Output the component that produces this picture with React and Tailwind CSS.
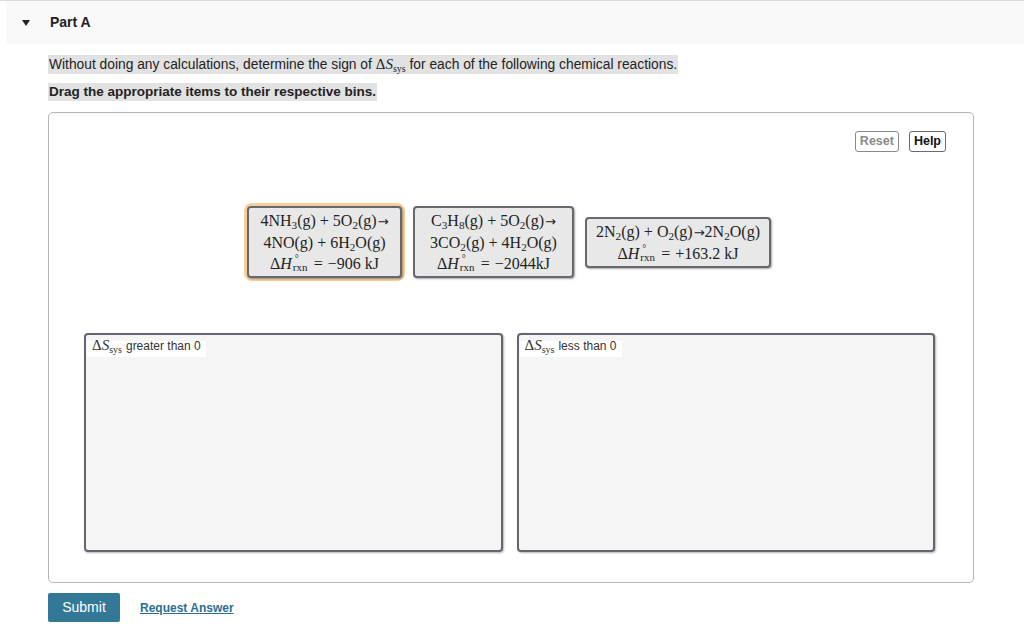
const serif = "font-['Liberation_Serif','DejaVu_Serif',serif]";

const Sub = ({ children }) => (
  <sub className="text-[0.7em] leading-none relative top-[0.28em] align-baseline">{children}</sub>
);

const Plus = () => <span className="mx-[4px]">+</span>;
const Eq = () => <span className="mx-[5px]">=</span>;
const Arrow = () => (
  <span className="font-['DejaVu_Sans',sans-serif] text-[13px] ml-[1px]">→</span>
);

const DeltaS = () => (
  <span className={`${serif} text-[15px] leading-none`}>
    Δ<i>S</i>
    <sub className="text-[10px] not-italic align-baseline relative top-[3px] leading-none">sys</sub>
  </span>
);

const DeltaH = () => (
  <span>
    Δ<i>H</i>
    <span className="relative inline-block w-[17px] h-[1em] align-baseline leading-none">
      <span className="absolute left-[3px] top-[1px] text-[10px]">°</span>
      <span className="absolute left-[1px] top-[9px] text-[11px]">rxn</span>
    </span>
  </span>
);

const Card = ({ lines, focused, width }) => (
  <div className={`rounded-[5px] ${focused ? 'ring-[3px] ring-[#f7d19a]' : ''}`}>
    <div
      className={`${serif} ${width} text-[16px] leading-[21px] text-[#222] text-center bg-[#e8e8e8] border-2 border-[#676770] rounded-[4px] py-[2px] shadow-[1px_1px_2px_rgba(0,0,0,0.35)]`}
    >
      {lines.map((l, i) => (
        <div key={i} className="whitespace-nowrap">{l}</div>
      ))}
    </div>
  </div>
);

const Bin = ({ label }) => (
  <div className="flex-1 h-[219px] bg-[#f5f5f5] border-2 border-[#65656f] rounded-[4px] shadow-[1px_1px_2px_rgba(0,0,0,0.3)] p-[1px]">
    <div className="inline-flex items-center gap-1 h-[16px] bg-white px-[5px] text-[12px] leading-none text-[#333] font-['Liberation_Sans',Arial,sans-serif]">
      <span className="relative -top-[3px] flex items-center gap-1">
        <DeltaS />
        <span>{label}</span>
      </span>
    </div>
  </div>
);

export default function App() {
  return (
    <div className="w-[1024px] h-[628px] bg-white font-['Liberation_Sans',Arial,sans-serif] text-[#222] overflow-hidden">
      {/* Part header */}
      <div className="border-t border-[#dcdcdc]">
        <div className="ml-[6px] h-[43px] bg-[#f9f9f9] flex items-center">
          <span className="ml-[16px] w-0 h-0 border-l-[4.5px] border-r-[4.5px] border-t-[6px] border-l-transparent border-r-transparent border-t-[#222]" />
          <span className="ml-[20px] text-[14px] font-bold text-[#222]">Part A</span>
        </div>
      </div>

      <div className="pl-[48px] pr-[50px]">
        <div className="mt-[11px] h-[19px] flex items-center">
          <span className="bg-[#e2e2e2] text-[13.8px] leading-[19px] text-[#222] px-[1px]">
            Without doing any calculations, determine the sign of <DeltaS /> for each of the following chemical reactions.
          </span>
        </div>
        <div className="mt-[9px] h-[18px] flex items-center">
          <span className="bg-[#e2e2e2] text-[13.5px] leading-[18px] font-bold text-[#222] px-[1px]">
            Drag the appropriate items to their respective bins.
          </span>
        </div>

        {/* Drag and drop area */}
        <div className="mt-[11px] w-[926px] h-[471px] border border-[#b5b5b5] rounded-[5px] flex flex-col">
          <div className="flex justify-end gap-[10px] pt-[18px] pr-[27px]">
            <button className="h-[21px] px-[4px] border border-[#8a8a8a] rounded-[3px] text-[12.5px] font-bold text-[#8a8a8a] bg-white">
              Reset
            </button>
            <button className="h-[21px] px-[4px] border border-[#6a6a6a] rounded-[3px] text-[12.5px] font-bold text-[#111] bg-white">
              Help
            </button>
          </div>

          <div className="mt-[54px] h-[72px] flex justify-center items-center gap-[11px] pr-[4px]">
            <Card
              focused
              width="w-[155px]"
              lines={[
                <>4NH<Sub>3</Sub>(g)<Plus />5O<Sub>2</Sub>(g)<Arrow /></>,
                <>4NO(g)<Plus />6H<Sub>2</Sub>O(g)</>,
                <><DeltaH /><Eq />−906 kJ</>,
              ]}
            />
            <Card
              width="w-[161px]"
              lines={[
                <>C<Sub>3</Sub>H<Sub>8</Sub>(g)<Plus />5O<Sub>2</Sub>(g)<Arrow /></>,
                <>3CO<Sub>2</Sub>(g)<Plus />4H<Sub>2</Sub>O(g)</>,
                <><DeltaH /><Eq />−2044kJ</>,
              ]}
            />
            <Card
              width="w-[186px]"
              lines={[
                <>2N<Sub>2</Sub>(g)<Plus />O<Sub>2</Sub>(g)<Arrow />2N<Sub>2</Sub>O(g)</>,
                <><DeltaH /><Eq />+163.2 kJ</>,
              ]}
            />
          </div>

          <div className="mt-[55px] flex gap-[14px] pl-[35px] pr-[38px]">
            <Bin label="greater than 0" />
            <Bin label="less than 0" />
          </div>
        </div>

        <div className="mt-[10px] flex items-center gap-[20px]">
          <button className="w-[72px] h-[29px] bg-[#337896] rounded-[2px] text-white text-[14px]">
            Submit
          </button>
          <a className="text-[12px] font-bold text-[#2c6e93] underline">Request Answer</a>
        </div>
      </div>
    </div>
  );
}
